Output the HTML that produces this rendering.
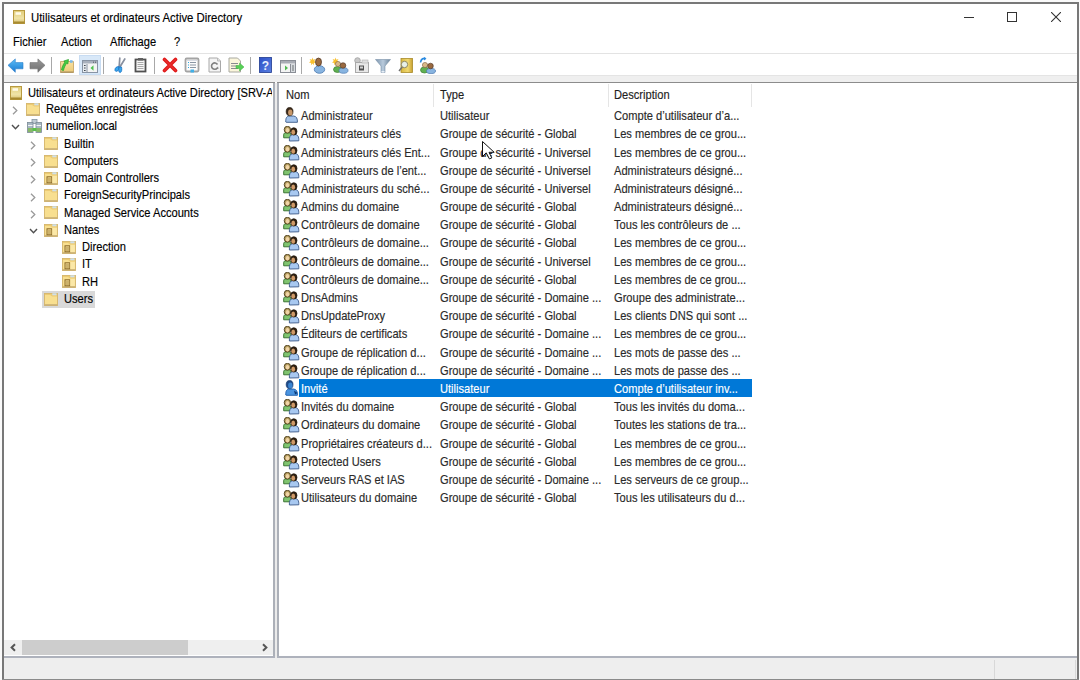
<!DOCTYPE html><html><head><meta charset="utf-8"><style>
html,body{margin:0;padding:0;}
body{width:1080px;height:680px;position:relative;overflow:hidden;background:#fafafa;font-family:"Liberation Sans",sans-serif;}
.t{position:absolute;white-space:nowrap;line-height:16px;height:16px;-webkit-text-stroke:0.15px currentColor;transform-origin:0 0;}
.i{position:absolute;display:block;}
.b{position:absolute;}
</style></head><body>
<div class="b" style="left:2px;top:2px;width:1077px;height:678px;background:#fff;"></div><div class="b" style="left:2px;top:2px;width:1077px;height:2px;background:#787878;"></div><div class="b" style="left:2px;top:2px;width:2px;height:678px;background:#787878;"></div><div class="b" style="left:1077px;top:2px;width:2px;height:678px;background:#787878;"></div><div class="b" style="left:2px;top:679px;width:1077px;height:1px;background:#8a8a8a;"></div><svg class="i" style="left:13px;top:10px" width="12" height="14" viewBox="0 0 12 14"><defs><linearGradient id="adg" x1="0" y1="0" x2="0" y2="1"><stop offset="0" stop-color="#e0cc78"/><stop offset="0.6" stop-color="#f0e4a8"/><stop offset="1" stop-color="#d8c070"/></linearGradient></defs><rect x="0.5" y="0.5" width="11" height="13" fill="url(#adg)" stroke="#b89a40" stroke-width="1"/><rect x="0.5" y="11.5" width="11" height="2" fill="#a88a30"/><rect x="2.5" y="2.2" width="5.5" height="2.6" fill="#fffbe8"/></svg><div class="t" style="left:31.00px;top:9.57px;font-size:12.2px;letter-spacing:0px;color:#000;transform:scaleX(0.933);">Utilisateurs et ordinateurs Active Directory</div>
<div class="b" style="left:964px;top:17px;width:10px;height:1px;background:#333;"></div><div class="b" style="left:1007px;top:12px;width:8px;height:8px;border:1px solid #333;"></div><svg class="i" style="left:1051px;top:12px" width="10" height="10" viewBox="0 0 10 10"><path d="M0 0 L10 10 M10 0 L0 10" stroke="#333" stroke-width="1.1"/></svg><div class="t" style="left:13.00px;top:34.07px;font-size:12.2px;letter-spacing:0px;color:#000;transform:scaleX(0.912);">Fichier</div>
<div class="t" style="left:61.00px;top:34.07px;font-size:12.2px;letter-spacing:0px;color:#000;transform:scaleX(0.912);">Action</div>
<div class="t" style="left:110.00px;top:34.07px;font-size:12.2px;letter-spacing:0px;color:#000;transform:scaleX(0.912);">Affichage</div>
<div class="t" style="left:174.00px;top:34.07px;font-size:12.2px;letter-spacing:0px;color:#000;transform:scaleX(0.912);">?</div>
<div class="b" style="left:4px;top:53px;width:1073px;height:1px;background:#e3e3e3;"></div><svg class="i" style="left:7px;top:58px" width="17" height="15" viewBox="0 0 17 15"><defs><linearGradient id="ba" x1="0" y1="0" x2="0" y2="1"><stop offset="0" stop-color="#5cc0f8"/><stop offset="1" stop-color="#1a78d0"/></linearGradient></defs><path d="M1 7.3 L8.3 0.9 V4.6 H16 V10.8 H8.3 V14.3 Z" fill="url(#ba)" stroke="#2a7cc8" stroke-width="0.6" stroke-linejoin="round"/></svg><svg class="i" style="left:29px;top:58px" width="17" height="15" viewBox="0 0 17 15"><defs><linearGradient id="fa" x1="0" y1="0" x2="0" y2="1"><stop offset="0" stop-color="#9a9a9a"/><stop offset="1" stop-color="#6e6e6e"/></linearGradient></defs><path d="M16 7.3 L8.9 0.9 V4.6 H1 V10.8 H8.9 V14.3 Z" fill="url(#fa)" stroke="#707070" stroke-width="0.6" stroke-linejoin="round"/></svg><div class="b" style="left:51px;top:57px;width:1px;height:17px;background:#a8a8a8;"></div><svg class="i" style="left:59px;top:57px" width="16" height="17" viewBox="0 0 16 17"><defs><linearGradient id="uf" x1="0" y1="0" x2="0" y2="1"><stop offset="0" stop-color="#f8e0a0"/><stop offset="1" stop-color="#eccb78"/></linearGradient></defs><path d="M1.5 4.5 h13 v11 h-13z" fill="url(#uf)" stroke="#c8a868" stroke-width="0.9"/><rect x="1.5" y="14.5" width="13" height="1.2" fill="#a89060"/><rect x="11" y="3.2" width="2.6" height="2.6" fill="#7ab8e8"/><path d="M2.5 13 C3 9.5 4.5 7 6 5 L4.8 4 L9.5 2.5 L8.8 7 L7.6 6.2 C6.5 8 5 10.5 4.5 13.5 Z" fill="#44cc44" stroke="#2aa02a" stroke-width="0.7" stroke-linejoin="round"/></svg><div class="b" style="left:79px;top:55px;width:22px;height:20px;background:#d8e8f8;box-shadow:inset 0 0 0 1px #c8dcf2;"></div><svg class="i" style="left:82px;top:60px" width="16" height="13" viewBox="0 0 16 13"><rect x="0.5" y="0.5" width="15" height="12" fill="#f4f4f4" stroke="#8894a4" stroke-width="1"/><rect x="1" y="1" width="14" height="2.5" fill="#a8b0bc"/><path d="M11 2.2 h1 M13 2.2 h1" stroke="#505860" stroke-width="1"/><rect x="1" y="4" width="3.5" height="8" fill="#e8ecf0"/><path d="M5 4 v8" stroke="#8894a4" stroke-width="1"/><rect x="2" y="5" width="1.6" height="1" fill="#404850"/><rect x="2" y="7.5" width="1.6" height="1" fill="#404850"/><rect x="2" y="10" width="1.6" height="1" fill="#404850"/><path d="M8.5 8 L11.5 5.3 V10.7z" fill="#50c050"/></svg><div class="b" style="left:103px;top:57px;width:1px;height:17px;background:#a8a8a8;"></div><svg class="i" style="left:112px;top:57px" width="14" height="17" viewBox="0 0 14 17"><path d="M7.2 9 L7.8 1.2 M8.2 9.5 L12.8 2" stroke="#8890a0" stroke-width="1.7" stroke-linecap="round"/><path d="M3 13.5 C2.5 11 4.5 9.5 7 9.5 L6.5 12.5 C6 14.5 3.5 15 3 13.5z" fill="#38a8f0" stroke="#1a70c0" stroke-width="0.8"/><path d="M7 10 L9.5 10 C10 12 10 15 8.2 15.5 C6.5 15.5 6.5 13 7 10z" fill="#38a8f0" stroke="#1a70c0" stroke-width="0.8"/></svg><svg class="i" style="left:134px;top:57px" width="13" height="16" viewBox="0 0 13 16"><rect x="1.5" y="2.5" width="10" height="12" fill="#f8f8f8" stroke="#505050" stroke-width="1.8"/><rect x="4" y="1" width="5" height="2.5" fill="#606060"/><rect x="3.5" y="5" width="6" height="0.9" fill="#a0a0a0"/><rect x="3.5" y="7" width="6" height="0.9" fill="#a0a0a0"/><rect x="3.5" y="9" width="6" height="0.9" fill="#a0a0a0"/><rect x="3.5" y="11" width="6" height="0.9" fill="#a0a0a0"/></svg><div class="b" style="left:154px;top:57px;width:1px;height:17px;background:#a8a8a8;"></div><svg class="i" style="left:162px;top:57px" width="16" height="16" viewBox="0 0 16 16"><path d="M2.5 2.5 L13.5 13.5 M13.5 2.5 L2.5 13.5" stroke="#e01818" stroke-width="3.6" stroke-linecap="round"/><path d="M2.5 2.5 L13.5 13.5 M13.5 2.5 L2.5 13.5" stroke="#f04040" stroke-width="1.2" stroke-linecap="round" opacity="0.6"/></svg><svg class="i" style="left:184px;top:57px" width="16" height="16" viewBox="0 0 16 16"><rect x="1.5" y="1.5" width="13" height="13" rx="1.2" fill="#fcfcfc" stroke="#a4a4a4" stroke-width="1.8"/><rect x="3" y="3" width="10" height="1" fill="#d8dce4"/><rect x="4" y="5" width="1" height="1" fill="#30a8e0"/><rect x="6" y="5" width="6" height="1" fill="#8a96a4"/><rect x="4" y="7.5" width="1" height="1" fill="#30a8e0"/><rect x="6" y="7.5" width="6" height="1" fill="#8a96a4"/><rect x="4" y="10" width="1" height="1" fill="#30a8e0"/><rect x="6" y="10" width="6" height="1" fill="#8a96a4"/><rect x="6.5" y="12.5" width="3.5" height="3" fill="#40b0e8"/></svg><svg class="i" style="left:208px;top:57px" width="14" height="16" viewBox="0 0 14 16"><path d="M1 1 h8.5 l3 3 v11 h-11.5z" fill="#f4f4f4" stroke="#a8a8a8" stroke-width="1"/><path d="M9.5 1 v3 h3" fill="#e0e0e0" stroke="#b0b0b0" stroke-width="0.8"/><path d="M9.3 11 A3.2 3.2 0 1 1 9.5 7.5" fill="none" stroke="#808080" stroke-width="1.6"/><path d="M8 11.5 L10.5 12 L10 9.5z" fill="#808080"/></svg><svg class="i" style="left:228px;top:57px" width="17" height="16" viewBox="0 0 17 16"><path d="M1 1 h8.5 l3 3 v11 h-11.5z" fill="#fbf6dc" stroke="#a8a8a0" stroke-width="1"/><path d="M3 6.5 h7 M3 9 h7 M3 11.5 h7" stroke="#8a8a90" stroke-width="1"/><path d="M8 8.5 h3.5 v-2.5 l4.5 4 l-4.5 4 v-2.5 h-3.5z" fill="#58d058" stroke="#40b040" stroke-width="0.5"/></svg><div class="b" style="left:250px;top:57px;width:1px;height:17px;background:#a8a8a8;"></div><svg class="i" style="left:259px;top:57px" width="13" height="16" viewBox="0 0 13 16"><defs><linearGradient id="hp" x1="0" y1="0" x2="1" y2="1"><stop offset="0" stop-color="#2c50c8"/><stop offset="1" stop-color="#5a80e0"/></linearGradient></defs><rect x="0.5" y="0.5" width="12" height="15" fill="url(#hp)" stroke="#1e3a90" stroke-width="0.8"/><text x="6.5" y="12.5" font-family="Liberation Sans" font-size="12" font-weight="bold" fill="#e8f0ff" text-anchor="middle">?</text></svg><svg class="i" style="left:280px;top:60px" width="16" height="13" viewBox="0 0 16 13"><rect x="0.5" y="0.5" width="15" height="12" fill="#f4f4f4" stroke="#8a8e96" stroke-width="1"/><rect x="1" y="1" width="14" height="2.5" fill="#a8acb4"/><rect x="11" y="4" width="4" height="8" fill="#d8dce0"/><path d="M10.5 4 v8" stroke="#8a8e96"/><path d="M12 6 h2 M12 8 h2 M12 10 h2" stroke="#606468" stroke-width="0.9"/><path d="M5 5.5 L8 8 L5 10.5z" fill="#50b850"/></svg><div class="b" style="left:301px;top:57px;width:1px;height:17px;background:#a8a8a8;"></div><svg class="i" style="left:309px;top:57px" width="17" height="17" viewBox="0 0 17 17"><path d="M3.5 0.5 l0.8 2.2 l2.2 -0.6 l-1.2 2 l1.8 1.5 l-2.3 0.3 l0.2 2.3 l-1.5 -1.6 l-1.5 1.6 l0.2 -2.3 l-2.2 -0.3 l1.8 -1.5 l-1.2 -2 l2.2 0.6z" fill="#f8c030"/><ellipse cx="10.5" cy="12.5" rx="5.2" ry="3.8" fill="#88b4e0" stroke="#4a78b0" stroke-width="0.8"/><ellipse cx="9.5" cy="5" rx="3" ry="4" fill="#9a6a40" stroke="#4a3020" stroke-width="0.7"/></svg><svg class="i" style="left:332px;top:57px" width="17" height="17" viewBox="0 0 17 17"><path d="M3.5 0.5 l0.8 2.2 l2.2 -0.6 l-1.2 2 l1.8 1.5 l-2.3 0.3 l0.2 2.3 l-1.5 -1.6 l-1.5 1.6 l0.2 -2.3 l-2.2 -0.3 l1.8 -1.5 l-1.2 -2 l2.2 0.6z" fill="#f8c030"/><ellipse cx="5.5" cy="12.5" rx="4" ry="3" fill="#60b050" stroke="#3a8030" stroke-width="0.7"/><circle cx="6" cy="7" r="2.6" fill="#d8b888" stroke="#806040" stroke-width="0.6"/><ellipse cx="11.5" cy="13.5" rx="4.5" ry="2.8" fill="#88b4e0" stroke="#4a78b0" stroke-width="0.7"/><circle cx="11" cy="8.5" r="2.8" fill="#9a6a40" stroke="#4a3020" stroke-width="0.6"/></svg><svg class="i" style="left:354px;top:57px" width="16" height="17" viewBox="0 0 16 17"><circle cx="3.5" cy="3.5" r="2.8" fill="#c8c8c8" stroke="#a0a0a0" stroke-width="0.8"/><rect x="1.5" y="5.5" width="13" height="10" fill="#e8e8e8" stroke="#a8a8a8" stroke-width="1"/><rect x="8" y="3" width="6" height="3" fill="#e0e0e0" stroke="#b0b0b0" stroke-width="0.6"/><rect x="5" y="8.5" width="5" height="5" fill="#505050"/><rect x="6" y="9.5" width="3" height="2" fill="#d0d0d0"/></svg><svg class="i" style="left:375px;top:58px" width="16" height="15" viewBox="0 0 16 15"><defs><linearGradient id="fl" x1="0" y1="0" x2="1" y2="0"><stop offset="0" stop-color="#7c94ac"/><stop offset="0.5" stop-color="#b8cadc"/><stop offset="1" stop-color="#6a8298"/></linearGradient></defs><path d="M0.5 1.5 h15 l-5.5 6.5 v6.5 h-4 v-6.5z" fill="url(#fl)" stroke="#7890a8" stroke-width="0.6"/><rect x="6.5" y="13" width="3" height="1.5" fill="#e8f0f8"/></svg><svg class="i" style="left:398px;top:58px" width="15" height="15" viewBox="0 0 15 15"><defs><linearGradient id="fd" x1="0" y1="0" x2="1" y2="0"><stop offset="0" stop-color="#d8b840"/><stop offset="0.6" stop-color="#f0d870"/><stop offset="1" stop-color="#c8a030"/></linearGradient></defs><rect x="3" y="0.5" width="11.5" height="14" fill="url(#fd)" stroke="#a88a28" stroke-width="0.8"/><circle cx="6.5" cy="6.5" r="3.2" fill="#e8f0e8" stroke="#908860" stroke-width="1"/><path d="M4.2 9 L1 13" stroke="#707070" stroke-width="1.4"/></svg><svg class="i" style="left:419px;top:57px" width="17" height="17" viewBox="0 0 17 17"><path d="M1.5 5.5 C2 2 4 1 6.5 1.5" fill="none" stroke="#2a8ae0" stroke-width="1.6"/><path d="M5 0 L7.5 1.8 L5 3.5z" fill="#2a8ae0"/><ellipse cx="5.5" cy="13" rx="4" ry="3" fill="#60b050" stroke="#3a8030" stroke-width="0.7"/><circle cx="6" cy="8" r="2.6" fill="#d8b888" stroke="#806040" stroke-width="0.6"/><ellipse cx="12" cy="14" rx="4.5" ry="2.6" fill="#88b4e0" stroke="#4a78b0" stroke-width="0.7"/><circle cx="11.5" cy="9" r="2.8" fill="#9a6a40" stroke="#4a3020" stroke-width="0.6"/></svg><div class="b" style="left:4px;top:75px;width:1073px;height:7px;background:#efefef;border-top:1px solid #e4e4e4;box-sizing:border-box;"></div><div class="b" style="left:4px;top:82px;width:271px;height:1px;background:#8c8c8c;"></div><div class="b" style="left:277px;top:82px;width:800px;height:1px;background:#8c8c8c;"></div><div class="b" style="left:4px;top:83px;width:1073px;height:575px;background:#ebebeb;"></div><div class="b" style="left:4px;top:83px;width:269px;height:573px;background:#fff;"></div><div class="b" style="left:273px;top:83px;width:2px;height:575px;background:#acb0b8;"></div><div class="b" style="left:4px;top:656px;width:271px;height:2px;background:#aeb2bc;"></div><div class="b" style="left:279px;top:83px;width:798px;height:573px;background:#fff;"></div><div class="b" style="left:277px;top:83px;width:2px;height:575px;background:#acb0b8;"></div><div class="b" style="left:277px;top:656px;width:800px;height:2px;background:#aeb2bc;"></div><div class="b" style="left:4px;top:658px;width:1073px;height:21px;background:#eeeeee;"></div><div class="b" style="left:994px;top:660px;width:1px;height:19px;background:#d8d8d8;"></div><div class="b" style="left:1075px;top:660px;width:1px;height:19px;background:#d8d8d8;"></div><div class="b" style="left:4px;top:640px;width:269px;height:15px;background:#efefef;"></div><div class="b" style="left:22px;top:640px;width:166px;height:15px;background:#cdcdcd;"></div><svg class="i" style="left:9px;top:643px" width="8" height="9" viewBox="0 0 8 9"><path d="M6 1.2 L2.6 4.5 L6 7.8" fill="none" stroke="#555" stroke-width="2"/></svg><svg class="i" style="left:261px;top:643px" width="8" height="9" viewBox="0 0 8 9"><path d="M2 1.2 L5.4 4.5 L2 7.8" fill="none" stroke="#555" stroke-width="2"/></svg><svg class="i" style="left:9.7px;top:85.5px" width="12" height="14" viewBox="0 0 12 14"><defs><linearGradient id="adg" x1="0" y1="0" x2="0" y2="1"><stop offset="0" stop-color="#e0cc78"/><stop offset="0.6" stop-color="#f0e4a8"/><stop offset="1" stop-color="#d8c070"/></linearGradient></defs><rect x="0.5" y="0.5" width="11" height="13" fill="url(#adg)" stroke="#b89a40" stroke-width="1"/><rect x="0.5" y="11.5" width="11" height="2" fill="#a88a30"/><rect x="2.5" y="2.2" width="5.5" height="2.6" fill="#fffbe8"/></svg><div class="b" style="left:28px;top:83px;width:244px;height:17px;overflow:hidden;"><div class="t" style="left:0.00px;top:1.77px;font-size:12.2px;letter-spacing:0px;color:#000;transform:scaleX(0.912);">Utilisateurs et ordinateurs Active Directory [SRV-AD01]</div>
</div><svg class="i" style="left:12.099999999999998px;top:106.25px" width="7" height="9" viewBox="0 0 7 9"><path d="M1 0.8 L4.8 4.5 L1 8.2" fill="none" stroke="#9a9a9a" stroke-width="1.3"/></svg><svg class="i" style="left:25.599999999999998px;top:102.75px" width="14" height="13" viewBox="0 0 14 13"><rect x="0.5" y="0.5" width="13" height="12" fill="#eccb74" stroke="#d6b66a" stroke-width="0.9"/><rect x="8.3" y="0.3" width="4.2" height="2" fill="#cfe0ea"/><path d="M1 2 H6 L8.2 3.4 H13 V11.6 H1 Z" fill="#f8df90"/><rect x="0.5" y="11.3" width="13" height="1.2" fill="#c4ac78"/></svg><div class="t" style="left:46.40px;top:101.22px;font-size:12.2px;letter-spacing:0px;color:#000;transform:scaleX(0.912);">Requêtes enregistrées</div>
<svg class="i" style="left:10.599999999999998px;top:124.29999999999998px" width="10" height="7" viewBox="0 0 10 7"><path d="M1 1 L4.5 4.8 L8 1" fill="none" stroke="#505050" stroke-width="1.4"/></svg><svg class="i" style="left:26.9px;top:119.19999999999999px" width="15" height="14" viewBox="0 0 15 14"><rect x="5" y="0.5" width="5" height="4" fill="#c0ccd4" stroke="#8494a0" stroke-width="0.8"/><rect x="0.5" y="3.5" width="5.5" height="10" fill="#a8b8c4" stroke="#7a8a96" stroke-width="0.8"/><rect x="9" y="3.5" width="5.5" height="10" fill="#a8b8c4" stroke="#7a8a96" stroke-width="0.8"/><path d="M1 6.5 h4.5 M9.5 6.5 h4.5" stroke="#f4f4f4" stroke-width="1"/><rect x="1" y="9" width="4.6" height="4" fill="#88b868"/><rect x="9.4" y="9" width="4.6" height="4" fill="#88b868"/><rect x="5.5" y="9" width="4" height="3" fill="#58c048"/></svg><div class="t" style="left:46.40px;top:118.47px;font-size:12.2px;letter-spacing:0px;color:#000;transform:scaleX(0.912);">numelion.local</div>
<svg class="i" style="left:30.100000000000005px;top:140.75px" width="7" height="9" viewBox="0 0 7 9"><path d="M1 0.8 L4.8 4.5 L1 8.2" fill="none" stroke="#9a9a9a" stroke-width="1.3"/></svg><svg class="i" style="left:43.60000000000001px;top:137.25px" width="14" height="13" viewBox="0 0 14 13"><rect x="0.5" y="0.5" width="13" height="12" fill="#eccb74" stroke="#d6b66a" stroke-width="0.9"/><rect x="8.3" y="0.3" width="4.2" height="2" fill="#cfe0ea"/><path d="M1 2 H6 L8.2 3.4 H13 V11.6 H1 Z" fill="#f8df90"/><rect x="0.5" y="11.3" width="13" height="1.2" fill="#c4ac78"/></svg><div class="t" style="left:64.40px;top:135.72px;font-size:12.2px;letter-spacing:0px;color:#000;transform:scaleX(0.912);">Builtin</div>
<svg class="i" style="left:30.100000000000005px;top:158.0px" width="7" height="9" viewBox="0 0 7 9"><path d="M1 0.8 L4.8 4.5 L1 8.2" fill="none" stroke="#9a9a9a" stroke-width="1.3"/></svg><svg class="i" style="left:43.60000000000001px;top:154.5px" width="14" height="13" viewBox="0 0 14 13"><rect x="0.5" y="0.5" width="13" height="12" fill="#eccb74" stroke="#d6b66a" stroke-width="0.9"/><rect x="8.3" y="0.3" width="4.2" height="2" fill="#cfe0ea"/><path d="M1 2 H6 L8.2 3.4 H13 V11.6 H1 Z" fill="#f8df90"/><rect x="0.5" y="11.3" width="13" height="1.2" fill="#c4ac78"/></svg><div class="t" style="left:64.40px;top:152.97px;font-size:12.2px;letter-spacing:0px;color:#000;transform:scaleX(0.912);">Computers</div>
<svg class="i" style="left:30.100000000000005px;top:175.25px" width="7" height="9" viewBox="0 0 7 9"><path d="M1 0.8 L4.8 4.5 L1 8.2" fill="none" stroke="#9a9a9a" stroke-width="1.3"/></svg><svg class="i" style="left:43.60000000000001px;top:171.75px" width="14" height="13" viewBox="0 0 14 13"><rect x="0.5" y="0.5" width="13" height="12" fill="#eccb74" stroke="#d6b66a" stroke-width="0.9"/><rect x="8.3" y="0.3" width="4.2" height="2" fill="#cfe0ea"/><path d="M1 2 H6 L8.2 3.4 H13 V11.6 H1 Z" fill="#f8df90"/><rect x="0.5" y="11.3" width="13" height="1.2" fill="#c4ac78"/><rect x="3" y="4.8" width="4.8" height="6" fill="#f0d890" stroke="#8a6a28" stroke-width="1"/><path d="M4 7 h3 M4 9 h3" stroke="#8a6a28" stroke-width="0.7"/><rect x="8.3" y="4" width="4.5" height="7" fill="#fbe8a8"/></svg><div class="t" style="left:64.40px;top:170.22px;font-size:12.2px;letter-spacing:0px;color:#000;transform:scaleX(0.912);">Domain Controllers</div>
<svg class="i" style="left:30.100000000000005px;top:192.5px" width="7" height="9" viewBox="0 0 7 9"><path d="M1 0.8 L4.8 4.5 L1 8.2" fill="none" stroke="#9a9a9a" stroke-width="1.3"/></svg><svg class="i" style="left:43.60000000000001px;top:189.0px" width="14" height="13" viewBox="0 0 14 13"><rect x="0.5" y="0.5" width="13" height="12" fill="#eccb74" stroke="#d6b66a" stroke-width="0.9"/><rect x="8.3" y="0.3" width="4.2" height="2" fill="#cfe0ea"/><path d="M1 2 H6 L8.2 3.4 H13 V11.6 H1 Z" fill="#f8df90"/><rect x="0.5" y="11.3" width="13" height="1.2" fill="#c4ac78"/></svg><div class="t" style="left:64.40px;top:187.47px;font-size:12.2px;letter-spacing:0px;color:#000;transform:scaleX(0.912);">ForeignSecurityPrincipals</div>
<svg class="i" style="left:30.100000000000005px;top:209.75px" width="7" height="9" viewBox="0 0 7 9"><path d="M1 0.8 L4.8 4.5 L1 8.2" fill="none" stroke="#9a9a9a" stroke-width="1.3"/></svg><svg class="i" style="left:43.60000000000001px;top:206.25px" width="14" height="13" viewBox="0 0 14 13"><rect x="0.5" y="0.5" width="13" height="12" fill="#eccb74" stroke="#d6b66a" stroke-width="0.9"/><rect x="8.3" y="0.3" width="4.2" height="2" fill="#cfe0ea"/><path d="M1 2 H6 L8.2 3.4 H13 V11.6 H1 Z" fill="#f8df90"/><rect x="0.5" y="11.3" width="13" height="1.2" fill="#c4ac78"/></svg><div class="t" style="left:64.40px;top:204.72px;font-size:12.2px;letter-spacing:0px;color:#000;transform:scaleX(0.912);">Managed Service Accounts</div>
<svg class="i" style="left:28.600000000000005px;top:227.79999999999998px" width="10" height="7" viewBox="0 0 10 7"><path d="M1 1 L4.5 4.8 L8 1" fill="none" stroke="#505050" stroke-width="1.4"/></svg><svg class="i" style="left:43.60000000000001px;top:223.5px" width="14" height="13" viewBox="0 0 14 13"><rect x="0.5" y="0.5" width="13" height="12" fill="#eccb74" stroke="#d6b66a" stroke-width="0.9"/><rect x="8.3" y="0.3" width="4.2" height="2" fill="#cfe0ea"/><path d="M1 2 H6 L8.2 3.4 H13 V11.6 H1 Z" fill="#f8df90"/><rect x="0.5" y="11.3" width="13" height="1.2" fill="#c4ac78"/><rect x="3" y="4.8" width="4.8" height="6" fill="#f0d890" stroke="#8a6a28" stroke-width="1"/><path d="M4 7 h3 M4 9 h3" stroke="#8a6a28" stroke-width="0.7"/><rect x="8.3" y="4" width="4.5" height="7" fill="#fbe8a8"/></svg><div class="t" style="left:64.40px;top:221.97px;font-size:12.2px;letter-spacing:0px;color:#000;transform:scaleX(0.912);">Nantes</div>
<svg class="i" style="left:61.60000000000001px;top:240.75px" width="14" height="13" viewBox="0 0 14 13"><rect x="0.5" y="0.5" width="13" height="12" fill="#eccb74" stroke="#d6b66a" stroke-width="0.9"/><rect x="8.3" y="0.3" width="4.2" height="2" fill="#cfe0ea"/><path d="M1 2 H6 L8.2 3.4 H13 V11.6 H1 Z" fill="#f8df90"/><rect x="0.5" y="11.3" width="13" height="1.2" fill="#c4ac78"/><rect x="3" y="4.8" width="4.8" height="6" fill="#f0d890" stroke="#8a6a28" stroke-width="1"/><path d="M4 7 h3 M4 9 h3" stroke="#8a6a28" stroke-width="0.7"/><rect x="8.3" y="4" width="4.5" height="7" fill="#fbe8a8"/></svg><div class="t" style="left:82.40px;top:239.22px;font-size:12.2px;letter-spacing:0px;color:#000;transform:scaleX(0.912);">Direction</div>
<svg class="i" style="left:61.60000000000001px;top:258.0px" width="14" height="13" viewBox="0 0 14 13"><rect x="0.5" y="0.5" width="13" height="12" fill="#eccb74" stroke="#d6b66a" stroke-width="0.9"/><rect x="8.3" y="0.3" width="4.2" height="2" fill="#cfe0ea"/><path d="M1 2 H6 L8.2 3.4 H13 V11.6 H1 Z" fill="#f8df90"/><rect x="0.5" y="11.3" width="13" height="1.2" fill="#c4ac78"/><rect x="3" y="4.8" width="4.8" height="6" fill="#f0d890" stroke="#8a6a28" stroke-width="1"/><path d="M4 7 h3 M4 9 h3" stroke="#8a6a28" stroke-width="0.7"/><rect x="8.3" y="4" width="4.5" height="7" fill="#fbe8a8"/></svg><div class="t" style="left:82.40px;top:256.47px;font-size:12.2px;letter-spacing:0px;color:#000;transform:scaleX(0.912);">IT</div>
<svg class="i" style="left:61.60000000000001px;top:275.25px" width="14" height="13" viewBox="0 0 14 13"><rect x="0.5" y="0.5" width="13" height="12" fill="#eccb74" stroke="#d6b66a" stroke-width="0.9"/><rect x="8.3" y="0.3" width="4.2" height="2" fill="#cfe0ea"/><path d="M1 2 H6 L8.2 3.4 H13 V11.6 H1 Z" fill="#f8df90"/><rect x="0.5" y="11.3" width="13" height="1.2" fill="#c4ac78"/><rect x="3" y="4.8" width="4.8" height="6" fill="#f0d890" stroke="#8a6a28" stroke-width="1"/><path d="M4 7 h3 M4 9 h3" stroke="#8a6a28" stroke-width="0.7"/><rect x="8.3" y="4" width="4.5" height="7" fill="#fbe8a8"/></svg><div class="t" style="left:82.40px;top:273.72px;font-size:12.2px;letter-spacing:0px;color:#000;transform:scaleX(0.912);">RH</div>
<div class="b" style="left:42px;top:291.00px;width:53px;height:17px;background:#d9d9d9;"></div><svg class="i" style="left:43.60000000000001px;top:292.5px" width="14" height="13" viewBox="0 0 14 13"><rect x="0.5" y="0.5" width="13" height="12" fill="#eccb74" stroke="#d6b66a" stroke-width="0.9"/><rect x="8.3" y="0.3" width="4.2" height="2" fill="#cfe0ea"/><path d="M1 2 H6 L8.2 3.4 H13 V11.6 H1 Z" fill="#f8df90"/><rect x="0.5" y="11.3" width="13" height="1.2" fill="#c4ac78"/></svg><div class="t" style="left:64.40px;top:290.97px;font-size:12.2px;letter-spacing:0px;color:#000;transform:scaleX(0.912);">Users</div>
<div class="t" style="left:285.50px;top:87.27px;font-size:12.2px;letter-spacing:0px;color:#1e1e1e;transform:scaleX(0.912);">Nom</div>
<div class="t" style="left:439.50px;top:87.27px;font-size:12.2px;letter-spacing:0px;color:#1e1e1e;transform:scaleX(0.912);">Type</div>
<div class="t" style="left:613.90px;top:87.27px;font-size:12.2px;letter-spacing:0px;color:#1e1e1e;transform:scaleX(0.912);">Description</div>
<div class="b" style="left:433px;top:84px;width:1px;height:23px;background:#e5e5e5;"></div><div class="b" style="left:608px;top:84px;width:1px;height:23px;background:#e5e5e5;"></div><div class="b" style="left:751px;top:84px;width:1px;height:23px;background:#e5e5e5;"></div><svg class="i" style="left:285px;top:107.4px" width="16" height="16" viewBox="0 0 16 16"><path d="M0.8 15 C0.5 11 1.8 9.2 4.2 9 L8.5 9 C11.5 9.2 12.6 11.5 12.4 15.3 L1.2 15.3z" fill="#a4c4ec" stroke="#3a5a88" stroke-width="0.9"/><ellipse cx="4.6" cy="4.6" rx="3.4" ry="4.1" fill="#3a2818" stroke="#24180c" stroke-width="0.7"/><ellipse cx="5.3" cy="5.4" rx="2.2" ry="3" fill="#c8986a"/></svg><div class="t" style="left:300.60px;top:108.17px;font-size:12.2px;letter-spacing:0px;color:#2a2a2a;transform:scaleX(0.912);">Administrateur</div>
<div class="t" style="left:439.70px;top:108.17px;font-size:12.2px;letter-spacing:0px;color:#2a2a2a;transform:scaleX(0.912);">Utilisateur</div>
<div class="t" style="left:613.90px;top:108.17px;font-size:12.2px;letter-spacing:0px;color:#2a2a2a;transform:scaleX(0.912);">Compte d’utilisateur d’a...</div>
<svg class="i" style="left:283px;top:126.385px" width="17" height="16" viewBox="0 0 17 16"><path d="M0.7 11.8 L0.7 8.6 C0.7 7.3 1.8 6.8 3 6.8 L6 6.8 C7.2 6.8 7.8 7.5 7.8 8.6 L7.8 11.8z" fill="#80c470" stroke="#2e6a26" stroke-width="0.9"/><ellipse cx="4.4" cy="3.7" rx="3.2" ry="3.4" fill="#b8a060" stroke="#4a3a1a" stroke-width="0.9"/><ellipse cx="4.5" cy="4.3" rx="1.7" ry="2.3" fill="#f0d4a8"/><path d="M6.4 15 C6 11 7.3 8.8 9.8 8.6 L12.2 8.6 C14.8 8.8 16 10.6 15.8 14.8 L6.8 15z" fill="#a8c8f0" stroke="#3a5888" stroke-width="0.9"/><ellipse cx="10.8" cy="5.4" rx="3.2" ry="3.7" fill="#2e2012" stroke="#201408" stroke-width="0.7"/><ellipse cx="10.2" cy="6.2" rx="1.9" ry="2.6" fill="#d09a68"/></svg><div class="t" style="left:300.60px;top:126.36px;font-size:12.2px;letter-spacing:0px;color:#2a2a2a;transform:scaleX(0.912);">Administrateurs clés</div>
<div class="t" style="left:439.70px;top:126.36px;font-size:12.2px;letter-spacing:0px;color:#2a2a2a;transform:scaleX(0.912);">Groupe de sécurité - Global</div>
<div class="t" style="left:613.90px;top:126.36px;font-size:12.2px;letter-spacing:0px;color:#2a2a2a;transform:scaleX(0.912);">Les membres de ce grou...</div>
<svg class="i" style="left:283px;top:144.57000000000002px" width="17" height="16" viewBox="0 0 17 16"><path d="M0.7 11.8 L0.7 8.6 C0.7 7.3 1.8 6.8 3 6.8 L6 6.8 C7.2 6.8 7.8 7.5 7.8 8.6 L7.8 11.8z" fill="#80c470" stroke="#2e6a26" stroke-width="0.9"/><ellipse cx="4.4" cy="3.7" rx="3.2" ry="3.4" fill="#b8a060" stroke="#4a3a1a" stroke-width="0.9"/><ellipse cx="4.5" cy="4.3" rx="1.7" ry="2.3" fill="#f0d4a8"/><path d="M6.4 15 C6 11 7.3 8.8 9.8 8.6 L12.2 8.6 C14.8 8.8 16 10.6 15.8 14.8 L6.8 15z" fill="#a8c8f0" stroke="#3a5888" stroke-width="0.9"/><ellipse cx="10.8" cy="5.4" rx="3.2" ry="3.7" fill="#2e2012" stroke="#201408" stroke-width="0.7"/><ellipse cx="10.2" cy="6.2" rx="1.9" ry="2.6" fill="#d09a68"/></svg><div class="t" style="left:300.60px;top:144.54px;font-size:12.2px;letter-spacing:0px;color:#2a2a2a;transform:scaleX(0.912);">Administrateurs clés Ent...</div>
<div class="t" style="left:439.70px;top:144.54px;font-size:12.2px;letter-spacing:0px;color:#2a2a2a;transform:scaleX(0.912);">Groupe de sécurité - Universel</div>
<div class="t" style="left:613.90px;top:144.54px;font-size:12.2px;letter-spacing:0px;color:#2a2a2a;transform:scaleX(0.912);">Les membres de ce grou...</div>
<svg class="i" style="left:283px;top:162.755px" width="17" height="16" viewBox="0 0 17 16"><path d="M0.7 11.8 L0.7 8.6 C0.7 7.3 1.8 6.8 3 6.8 L6 6.8 C7.2 6.8 7.8 7.5 7.8 8.6 L7.8 11.8z" fill="#80c470" stroke="#2e6a26" stroke-width="0.9"/><ellipse cx="4.4" cy="3.7" rx="3.2" ry="3.4" fill="#b8a060" stroke="#4a3a1a" stroke-width="0.9"/><ellipse cx="4.5" cy="4.3" rx="1.7" ry="2.3" fill="#f0d4a8"/><path d="M6.4 15 C6 11 7.3 8.8 9.8 8.6 L12.2 8.6 C14.8 8.8 16 10.6 15.8 14.8 L6.8 15z" fill="#a8c8f0" stroke="#3a5888" stroke-width="0.9"/><ellipse cx="10.8" cy="5.4" rx="3.2" ry="3.7" fill="#2e2012" stroke="#201408" stroke-width="0.7"/><ellipse cx="10.2" cy="6.2" rx="1.9" ry="2.6" fill="#d09a68"/></svg><div class="t" style="left:300.60px;top:162.73px;font-size:12.2px;letter-spacing:0px;color:#2a2a2a;transform:scaleX(0.912);">Administrateurs de l’ent...</div>
<div class="t" style="left:439.70px;top:162.73px;font-size:12.2px;letter-spacing:0px;color:#2a2a2a;transform:scaleX(0.912);">Groupe de sécurité - Universel</div>
<div class="t" style="left:613.90px;top:162.73px;font-size:12.2px;letter-spacing:0px;color:#2a2a2a;transform:scaleX(0.912);">Administrateurs désigné...</div>
<svg class="i" style="left:283px;top:180.94px" width="17" height="16" viewBox="0 0 17 16"><path d="M0.7 11.8 L0.7 8.6 C0.7 7.3 1.8 6.8 3 6.8 L6 6.8 C7.2 6.8 7.8 7.5 7.8 8.6 L7.8 11.8z" fill="#80c470" stroke="#2e6a26" stroke-width="0.9"/><ellipse cx="4.4" cy="3.7" rx="3.2" ry="3.4" fill="#b8a060" stroke="#4a3a1a" stroke-width="0.9"/><ellipse cx="4.5" cy="4.3" rx="1.7" ry="2.3" fill="#f0d4a8"/><path d="M6.4 15 C6 11 7.3 8.8 9.8 8.6 L12.2 8.6 C14.8 8.8 16 10.6 15.8 14.8 L6.8 15z" fill="#a8c8f0" stroke="#3a5888" stroke-width="0.9"/><ellipse cx="10.8" cy="5.4" rx="3.2" ry="3.7" fill="#2e2012" stroke="#201408" stroke-width="0.7"/><ellipse cx="10.2" cy="6.2" rx="1.9" ry="2.6" fill="#d09a68"/></svg><div class="t" style="left:300.60px;top:180.91px;font-size:12.2px;letter-spacing:0px;color:#2a2a2a;transform:scaleX(0.912);">Administrateurs du sché...</div>
<div class="t" style="left:439.70px;top:180.91px;font-size:12.2px;letter-spacing:0px;color:#2a2a2a;transform:scaleX(0.912);">Groupe de sécurité - Universel</div>
<div class="t" style="left:613.90px;top:180.91px;font-size:12.2px;letter-spacing:0px;color:#2a2a2a;transform:scaleX(0.912);">Administrateurs désigné...</div>
<svg class="i" style="left:283px;top:199.125px" width="17" height="16" viewBox="0 0 17 16"><path d="M0.7 11.8 L0.7 8.6 C0.7 7.3 1.8 6.8 3 6.8 L6 6.8 C7.2 6.8 7.8 7.5 7.8 8.6 L7.8 11.8z" fill="#80c470" stroke="#2e6a26" stroke-width="0.9"/><ellipse cx="4.4" cy="3.7" rx="3.2" ry="3.4" fill="#b8a060" stroke="#4a3a1a" stroke-width="0.9"/><ellipse cx="4.5" cy="4.3" rx="1.7" ry="2.3" fill="#f0d4a8"/><path d="M6.4 15 C6 11 7.3 8.8 9.8 8.6 L12.2 8.6 C14.8 8.8 16 10.6 15.8 14.8 L6.8 15z" fill="#a8c8f0" stroke="#3a5888" stroke-width="0.9"/><ellipse cx="10.8" cy="5.4" rx="3.2" ry="3.7" fill="#2e2012" stroke="#201408" stroke-width="0.7"/><ellipse cx="10.2" cy="6.2" rx="1.9" ry="2.6" fill="#d09a68"/></svg><div class="t" style="left:300.60px;top:199.10px;font-size:12.2px;letter-spacing:0px;color:#2a2a2a;transform:scaleX(0.912);">Admins du domaine</div>
<div class="t" style="left:439.70px;top:199.10px;font-size:12.2px;letter-spacing:0px;color:#2a2a2a;transform:scaleX(0.912);">Groupe de sécurité - Global</div>
<div class="t" style="left:613.90px;top:199.10px;font-size:12.2px;letter-spacing:0px;color:#2a2a2a;transform:scaleX(0.912);">Administrateurs désigné...</div>
<svg class="i" style="left:283px;top:217.31px" width="17" height="16" viewBox="0 0 17 16"><path d="M0.7 11.8 L0.7 8.6 C0.7 7.3 1.8 6.8 3 6.8 L6 6.8 C7.2 6.8 7.8 7.5 7.8 8.6 L7.8 11.8z" fill="#80c470" stroke="#2e6a26" stroke-width="0.9"/><ellipse cx="4.4" cy="3.7" rx="3.2" ry="3.4" fill="#b8a060" stroke="#4a3a1a" stroke-width="0.9"/><ellipse cx="4.5" cy="4.3" rx="1.7" ry="2.3" fill="#f0d4a8"/><path d="M6.4 15 C6 11 7.3 8.8 9.8 8.6 L12.2 8.6 C14.8 8.8 16 10.6 15.8 14.8 L6.8 15z" fill="#a8c8f0" stroke="#3a5888" stroke-width="0.9"/><ellipse cx="10.8" cy="5.4" rx="3.2" ry="3.7" fill="#2e2012" stroke="#201408" stroke-width="0.7"/><ellipse cx="10.2" cy="6.2" rx="1.9" ry="2.6" fill="#d09a68"/></svg><div class="t" style="left:300.60px;top:217.28px;font-size:12.2px;letter-spacing:0px;color:#2a2a2a;transform:scaleX(0.912);">Contrôleurs de domaine</div>
<div class="t" style="left:439.70px;top:217.28px;font-size:12.2px;letter-spacing:0px;color:#2a2a2a;transform:scaleX(0.912);">Groupe de sécurité - Global</div>
<div class="t" style="left:613.90px;top:217.28px;font-size:12.2px;letter-spacing:0px;color:#2a2a2a;transform:scaleX(0.912);">Tous les contrôleurs de ...</div>
<svg class="i" style="left:283px;top:235.495px" width="17" height="16" viewBox="0 0 17 16"><path d="M0.7 11.8 L0.7 8.6 C0.7 7.3 1.8 6.8 3 6.8 L6 6.8 C7.2 6.8 7.8 7.5 7.8 8.6 L7.8 11.8z" fill="#80c470" stroke="#2e6a26" stroke-width="0.9"/><ellipse cx="4.4" cy="3.7" rx="3.2" ry="3.4" fill="#b8a060" stroke="#4a3a1a" stroke-width="0.9"/><ellipse cx="4.5" cy="4.3" rx="1.7" ry="2.3" fill="#f0d4a8"/><path d="M6.4 15 C6 11 7.3 8.8 9.8 8.6 L12.2 8.6 C14.8 8.8 16 10.6 15.8 14.8 L6.8 15z" fill="#a8c8f0" stroke="#3a5888" stroke-width="0.9"/><ellipse cx="10.8" cy="5.4" rx="3.2" ry="3.7" fill="#2e2012" stroke="#201408" stroke-width="0.7"/><ellipse cx="10.2" cy="6.2" rx="1.9" ry="2.6" fill="#d09a68"/></svg><div class="t" style="left:300.60px;top:235.47px;font-size:12.2px;letter-spacing:0px;color:#2a2a2a;transform:scaleX(0.912);">Contrôleurs de domaine...</div>
<div class="t" style="left:439.70px;top:235.47px;font-size:12.2px;letter-spacing:0px;color:#2a2a2a;transform:scaleX(0.912);">Groupe de sécurité - Global</div>
<div class="t" style="left:613.90px;top:235.47px;font-size:12.2px;letter-spacing:0px;color:#2a2a2a;transform:scaleX(0.912);">Les membres de ce grou...</div>
<svg class="i" style="left:283px;top:253.68px" width="17" height="16" viewBox="0 0 17 16"><path d="M0.7 11.8 L0.7 8.6 C0.7 7.3 1.8 6.8 3 6.8 L6 6.8 C7.2 6.8 7.8 7.5 7.8 8.6 L7.8 11.8z" fill="#80c470" stroke="#2e6a26" stroke-width="0.9"/><ellipse cx="4.4" cy="3.7" rx="3.2" ry="3.4" fill="#b8a060" stroke="#4a3a1a" stroke-width="0.9"/><ellipse cx="4.5" cy="4.3" rx="1.7" ry="2.3" fill="#f0d4a8"/><path d="M6.4 15 C6 11 7.3 8.8 9.8 8.6 L12.2 8.6 C14.8 8.8 16 10.6 15.8 14.8 L6.8 15z" fill="#a8c8f0" stroke="#3a5888" stroke-width="0.9"/><ellipse cx="10.8" cy="5.4" rx="3.2" ry="3.7" fill="#2e2012" stroke="#201408" stroke-width="0.7"/><ellipse cx="10.2" cy="6.2" rx="1.9" ry="2.6" fill="#d09a68"/></svg><div class="t" style="left:300.60px;top:253.65px;font-size:12.2px;letter-spacing:0px;color:#2a2a2a;transform:scaleX(0.912);">Contrôleurs de domaine...</div>
<div class="t" style="left:439.70px;top:253.65px;font-size:12.2px;letter-spacing:0px;color:#2a2a2a;transform:scaleX(0.912);">Groupe de sécurité - Universel</div>
<div class="t" style="left:613.90px;top:253.65px;font-size:12.2px;letter-spacing:0px;color:#2a2a2a;transform:scaleX(0.912);">Les membres de ce grou...</div>
<svg class="i" style="left:283px;top:271.865px" width="17" height="16" viewBox="0 0 17 16"><path d="M0.7 11.8 L0.7 8.6 C0.7 7.3 1.8 6.8 3 6.8 L6 6.8 C7.2 6.8 7.8 7.5 7.8 8.6 L7.8 11.8z" fill="#80c470" stroke="#2e6a26" stroke-width="0.9"/><ellipse cx="4.4" cy="3.7" rx="3.2" ry="3.4" fill="#b8a060" stroke="#4a3a1a" stroke-width="0.9"/><ellipse cx="4.5" cy="4.3" rx="1.7" ry="2.3" fill="#f0d4a8"/><path d="M6.4 15 C6 11 7.3 8.8 9.8 8.6 L12.2 8.6 C14.8 8.8 16 10.6 15.8 14.8 L6.8 15z" fill="#a8c8f0" stroke="#3a5888" stroke-width="0.9"/><ellipse cx="10.8" cy="5.4" rx="3.2" ry="3.7" fill="#2e2012" stroke="#201408" stroke-width="0.7"/><ellipse cx="10.2" cy="6.2" rx="1.9" ry="2.6" fill="#d09a68"/></svg><div class="t" style="left:300.60px;top:271.84px;font-size:12.2px;letter-spacing:0px;color:#2a2a2a;transform:scaleX(0.912);">Contrôleurs de domaine...</div>
<div class="t" style="left:439.70px;top:271.84px;font-size:12.2px;letter-spacing:0px;color:#2a2a2a;transform:scaleX(0.912);">Groupe de sécurité - Global</div>
<div class="t" style="left:613.90px;top:271.84px;font-size:12.2px;letter-spacing:0px;color:#2a2a2a;transform:scaleX(0.912);">Les membres de ce grou...</div>
<svg class="i" style="left:283px;top:290.05px" width="17" height="16" viewBox="0 0 17 16"><path d="M0.7 11.8 L0.7 8.6 C0.7 7.3 1.8 6.8 3 6.8 L6 6.8 C7.2 6.8 7.8 7.5 7.8 8.6 L7.8 11.8z" fill="#80c470" stroke="#2e6a26" stroke-width="0.9"/><ellipse cx="4.4" cy="3.7" rx="3.2" ry="3.4" fill="#b8a060" stroke="#4a3a1a" stroke-width="0.9"/><ellipse cx="4.5" cy="4.3" rx="1.7" ry="2.3" fill="#f0d4a8"/><path d="M6.4 15 C6 11 7.3 8.8 9.8 8.6 L12.2 8.6 C14.8 8.8 16 10.6 15.8 14.8 L6.8 15z" fill="#a8c8f0" stroke="#3a5888" stroke-width="0.9"/><ellipse cx="10.8" cy="5.4" rx="3.2" ry="3.7" fill="#2e2012" stroke="#201408" stroke-width="0.7"/><ellipse cx="10.2" cy="6.2" rx="1.9" ry="2.6" fill="#d09a68"/></svg><div class="t" style="left:300.60px;top:290.02px;font-size:12.2px;letter-spacing:0px;color:#2a2a2a;transform:scaleX(0.912);">DnsAdmins</div>
<div class="t" style="left:439.70px;top:290.02px;font-size:12.2px;letter-spacing:0px;color:#2a2a2a;transform:scaleX(0.912);">Groupe de sécurité - Domaine ...</div>
<div class="t" style="left:613.90px;top:290.02px;font-size:12.2px;letter-spacing:0px;color:#2a2a2a;transform:scaleX(0.912);">Groupe des administrate...</div>
<svg class="i" style="left:283px;top:308.235px" width="17" height="16" viewBox="0 0 17 16"><path d="M0.7 11.8 L0.7 8.6 C0.7 7.3 1.8 6.8 3 6.8 L6 6.8 C7.2 6.8 7.8 7.5 7.8 8.6 L7.8 11.8z" fill="#80c470" stroke="#2e6a26" stroke-width="0.9"/><ellipse cx="4.4" cy="3.7" rx="3.2" ry="3.4" fill="#b8a060" stroke="#4a3a1a" stroke-width="0.9"/><ellipse cx="4.5" cy="4.3" rx="1.7" ry="2.3" fill="#f0d4a8"/><path d="M6.4 15 C6 11 7.3 8.8 9.8 8.6 L12.2 8.6 C14.8 8.8 16 10.6 15.8 14.8 L6.8 15z" fill="#a8c8f0" stroke="#3a5888" stroke-width="0.9"/><ellipse cx="10.8" cy="5.4" rx="3.2" ry="3.7" fill="#2e2012" stroke="#201408" stroke-width="0.7"/><ellipse cx="10.2" cy="6.2" rx="1.9" ry="2.6" fill="#d09a68"/></svg><div class="t" style="left:300.60px;top:308.21px;font-size:12.2px;letter-spacing:0px;color:#2a2a2a;transform:scaleX(0.912);">DnsUpdateProxy</div>
<div class="t" style="left:439.70px;top:308.21px;font-size:12.2px;letter-spacing:0px;color:#2a2a2a;transform:scaleX(0.912);">Groupe de sécurité - Global</div>
<div class="t" style="left:613.90px;top:308.21px;font-size:12.2px;letter-spacing:0px;color:#2a2a2a;transform:scaleX(0.912);">Les clients DNS qui sont ...</div>
<svg class="i" style="left:283px;top:326.42px" width="17" height="16" viewBox="0 0 17 16"><path d="M0.7 11.8 L0.7 8.6 C0.7 7.3 1.8 6.8 3 6.8 L6 6.8 C7.2 6.8 7.8 7.5 7.8 8.6 L7.8 11.8z" fill="#80c470" stroke="#2e6a26" stroke-width="0.9"/><ellipse cx="4.4" cy="3.7" rx="3.2" ry="3.4" fill="#b8a060" stroke="#4a3a1a" stroke-width="0.9"/><ellipse cx="4.5" cy="4.3" rx="1.7" ry="2.3" fill="#f0d4a8"/><path d="M6.4 15 C6 11 7.3 8.8 9.8 8.6 L12.2 8.6 C14.8 8.8 16 10.6 15.8 14.8 L6.8 15z" fill="#a8c8f0" stroke="#3a5888" stroke-width="0.9"/><ellipse cx="10.8" cy="5.4" rx="3.2" ry="3.7" fill="#2e2012" stroke="#201408" stroke-width="0.7"/><ellipse cx="10.2" cy="6.2" rx="1.9" ry="2.6" fill="#d09a68"/></svg><div class="t" style="left:300.60px;top:326.39px;font-size:12.2px;letter-spacing:0px;color:#2a2a2a;transform:scaleX(0.912);">Éditeurs de certificats</div>
<div class="t" style="left:439.70px;top:326.39px;font-size:12.2px;letter-spacing:0px;color:#2a2a2a;transform:scaleX(0.912);">Groupe de sécurité - Domaine ...</div>
<div class="t" style="left:613.90px;top:326.39px;font-size:12.2px;letter-spacing:0px;color:#2a2a2a;transform:scaleX(0.912);">Les membres de ce grou...</div>
<svg class="i" style="left:283px;top:344.60499999999996px" width="17" height="16" viewBox="0 0 17 16"><path d="M0.7 11.8 L0.7 8.6 C0.7 7.3 1.8 6.8 3 6.8 L6 6.8 C7.2 6.8 7.8 7.5 7.8 8.6 L7.8 11.8z" fill="#80c470" stroke="#2e6a26" stroke-width="0.9"/><ellipse cx="4.4" cy="3.7" rx="3.2" ry="3.4" fill="#b8a060" stroke="#4a3a1a" stroke-width="0.9"/><ellipse cx="4.5" cy="4.3" rx="1.7" ry="2.3" fill="#f0d4a8"/><path d="M6.4 15 C6 11 7.3 8.8 9.8 8.6 L12.2 8.6 C14.8 8.8 16 10.6 15.8 14.8 L6.8 15z" fill="#a8c8f0" stroke="#3a5888" stroke-width="0.9"/><ellipse cx="10.8" cy="5.4" rx="3.2" ry="3.7" fill="#2e2012" stroke="#201408" stroke-width="0.7"/><ellipse cx="10.2" cy="6.2" rx="1.9" ry="2.6" fill="#d09a68"/></svg><div class="t" style="left:300.60px;top:344.58px;font-size:12.2px;letter-spacing:0px;color:#2a2a2a;transform:scaleX(0.912);">Groupe de réplication d...</div>
<div class="t" style="left:439.70px;top:344.58px;font-size:12.2px;letter-spacing:0px;color:#2a2a2a;transform:scaleX(0.912);">Groupe de sécurité - Domaine ...</div>
<div class="t" style="left:613.90px;top:344.58px;font-size:12.2px;letter-spacing:0px;color:#2a2a2a;transform:scaleX(0.912);">Les mots de passe des ...</div>
<svg class="i" style="left:283px;top:362.79px" width="17" height="16" viewBox="0 0 17 16"><path d="M0.7 11.8 L0.7 8.6 C0.7 7.3 1.8 6.8 3 6.8 L6 6.8 C7.2 6.8 7.8 7.5 7.8 8.6 L7.8 11.8z" fill="#80c470" stroke="#2e6a26" stroke-width="0.9"/><ellipse cx="4.4" cy="3.7" rx="3.2" ry="3.4" fill="#b8a060" stroke="#4a3a1a" stroke-width="0.9"/><ellipse cx="4.5" cy="4.3" rx="1.7" ry="2.3" fill="#f0d4a8"/><path d="M6.4 15 C6 11 7.3 8.8 9.8 8.6 L12.2 8.6 C14.8 8.8 16 10.6 15.8 14.8 L6.8 15z" fill="#a8c8f0" stroke="#3a5888" stroke-width="0.9"/><ellipse cx="10.8" cy="5.4" rx="3.2" ry="3.7" fill="#2e2012" stroke="#201408" stroke-width="0.7"/><ellipse cx="10.2" cy="6.2" rx="1.9" ry="2.6" fill="#d09a68"/></svg><div class="t" style="left:300.60px;top:362.76px;font-size:12.2px;letter-spacing:0px;color:#2a2a2a;transform:scaleX(0.912);">Groupe de réplication d...</div>
<div class="t" style="left:439.70px;top:362.76px;font-size:12.2px;letter-spacing:0px;color:#2a2a2a;transform:scaleX(0.912);">Groupe de sécurité - Domaine ...</div>
<div class="t" style="left:613.90px;top:362.76px;font-size:12.2px;letter-spacing:0px;color:#2a2a2a;transform:scaleX(0.912);">Les mots de passe des ...</div>
<div class="b" style="left:299px;top:379.47px;width:453px;height:17.6px;background:#0078d7;"></div><svg class="i" style="left:285px;top:380.17499999999995px" width="16" height="16" viewBox="0 0 16 16"><path d="M0.8 15 C0.5 11 1.8 9.2 4.2 9 L8.5 9 C11.5 9.2 12.6 11.5 12.4 15.3 L1.2 15.3z" fill="#4a94e0" stroke="#1a5aa8" stroke-width="0.9"/><ellipse cx="4.6" cy="4.6" rx="3.4" ry="4.1" fill="#1e4a88" stroke="#123a70" stroke-width="0.7"/><ellipse cx="5.3" cy="5.4" rx="2.2" ry="3" fill="#3a84d0"/><path d="M9 10.5 L12.5 13 L10 14.5z" fill="#0a3a78"/></svg><div class="t" style="left:300.60px;top:380.95px;font-size:12.2px;letter-spacing:0px;color:#ffffff;transform:scaleX(0.912);">Invité</div>
<div class="t" style="left:439.70px;top:380.95px;font-size:12.2px;letter-spacing:0px;color:#ffffff;transform:scaleX(0.912);">Utilisateur</div>
<div class="t" style="left:613.90px;top:380.95px;font-size:12.2px;letter-spacing:0px;color:#ffffff;transform:scaleX(0.912);">Compte d’utilisateur inv...</div>
<svg class="i" style="left:283px;top:399.16px" width="17" height="16" viewBox="0 0 17 16"><path d="M0.7 11.8 L0.7 8.6 C0.7 7.3 1.8 6.8 3 6.8 L6 6.8 C7.2 6.8 7.8 7.5 7.8 8.6 L7.8 11.8z" fill="#80c470" stroke="#2e6a26" stroke-width="0.9"/><ellipse cx="4.4" cy="3.7" rx="3.2" ry="3.4" fill="#b8a060" stroke="#4a3a1a" stroke-width="0.9"/><ellipse cx="4.5" cy="4.3" rx="1.7" ry="2.3" fill="#f0d4a8"/><path d="M6.4 15 C6 11 7.3 8.8 9.8 8.6 L12.2 8.6 C14.8 8.8 16 10.6 15.8 14.8 L6.8 15z" fill="#a8c8f0" stroke="#3a5888" stroke-width="0.9"/><ellipse cx="10.8" cy="5.4" rx="3.2" ry="3.7" fill="#2e2012" stroke="#201408" stroke-width="0.7"/><ellipse cx="10.2" cy="6.2" rx="1.9" ry="2.6" fill="#d09a68"/></svg><div class="t" style="left:300.60px;top:399.13px;font-size:12.2px;letter-spacing:0px;color:#2a2a2a;transform:scaleX(0.912);">Invités du domaine</div>
<div class="t" style="left:439.70px;top:399.13px;font-size:12.2px;letter-spacing:0px;color:#2a2a2a;transform:scaleX(0.912);">Groupe de sécurité - Global</div>
<div class="t" style="left:613.90px;top:399.13px;font-size:12.2px;letter-spacing:0px;color:#2a2a2a;transform:scaleX(0.912);">Tous les invités du doma...</div>
<svg class="i" style="left:283px;top:417.34499999999997px" width="17" height="16" viewBox="0 0 17 16"><path d="M0.7 11.8 L0.7 8.6 C0.7 7.3 1.8 6.8 3 6.8 L6 6.8 C7.2 6.8 7.8 7.5 7.8 8.6 L7.8 11.8z" fill="#80c470" stroke="#2e6a26" stroke-width="0.9"/><ellipse cx="4.4" cy="3.7" rx="3.2" ry="3.4" fill="#b8a060" stroke="#4a3a1a" stroke-width="0.9"/><ellipse cx="4.5" cy="4.3" rx="1.7" ry="2.3" fill="#f0d4a8"/><path d="M6.4 15 C6 11 7.3 8.8 9.8 8.6 L12.2 8.6 C14.8 8.8 16 10.6 15.8 14.8 L6.8 15z" fill="#a8c8f0" stroke="#3a5888" stroke-width="0.9"/><ellipse cx="10.8" cy="5.4" rx="3.2" ry="3.7" fill="#2e2012" stroke="#201408" stroke-width="0.7"/><ellipse cx="10.2" cy="6.2" rx="1.9" ry="2.6" fill="#d09a68"/></svg><div class="t" style="left:300.60px;top:417.32px;font-size:12.2px;letter-spacing:0px;color:#2a2a2a;transform:scaleX(0.912);">Ordinateurs du domaine</div>
<div class="t" style="left:439.70px;top:417.32px;font-size:12.2px;letter-spacing:0px;color:#2a2a2a;transform:scaleX(0.912);">Groupe de sécurité - Global</div>
<div class="t" style="left:613.90px;top:417.32px;font-size:12.2px;letter-spacing:0px;color:#2a2a2a;transform:scaleX(0.912);">Toutes les stations de tra...</div>
<svg class="i" style="left:283px;top:435.53000000000003px" width="17" height="16" viewBox="0 0 17 16"><path d="M0.7 11.8 L0.7 8.6 C0.7 7.3 1.8 6.8 3 6.8 L6 6.8 C7.2 6.8 7.8 7.5 7.8 8.6 L7.8 11.8z" fill="#80c470" stroke="#2e6a26" stroke-width="0.9"/><ellipse cx="4.4" cy="3.7" rx="3.2" ry="3.4" fill="#b8a060" stroke="#4a3a1a" stroke-width="0.9"/><ellipse cx="4.5" cy="4.3" rx="1.7" ry="2.3" fill="#f0d4a8"/><path d="M6.4 15 C6 11 7.3 8.8 9.8 8.6 L12.2 8.6 C14.8 8.8 16 10.6 15.8 14.8 L6.8 15z" fill="#a8c8f0" stroke="#3a5888" stroke-width="0.9"/><ellipse cx="10.8" cy="5.4" rx="3.2" ry="3.7" fill="#2e2012" stroke="#201408" stroke-width="0.7"/><ellipse cx="10.2" cy="6.2" rx="1.9" ry="2.6" fill="#d09a68"/></svg><div class="t" style="left:300.60px;top:435.50px;font-size:12.2px;letter-spacing:0px;color:#2a2a2a;transform:scaleX(0.912);">Propriétaires créateurs d...</div>
<div class="t" style="left:439.70px;top:435.50px;font-size:12.2px;letter-spacing:0px;color:#2a2a2a;transform:scaleX(0.912);">Groupe de sécurité - Global</div>
<div class="t" style="left:613.90px;top:435.50px;font-size:12.2px;letter-spacing:0px;color:#2a2a2a;transform:scaleX(0.912);">Les membres de ce grou...</div>
<svg class="i" style="left:283px;top:453.715px" width="17" height="16" viewBox="0 0 17 16"><path d="M0.7 11.8 L0.7 8.6 C0.7 7.3 1.8 6.8 3 6.8 L6 6.8 C7.2 6.8 7.8 7.5 7.8 8.6 L7.8 11.8z" fill="#80c470" stroke="#2e6a26" stroke-width="0.9"/><ellipse cx="4.4" cy="3.7" rx="3.2" ry="3.4" fill="#b8a060" stroke="#4a3a1a" stroke-width="0.9"/><ellipse cx="4.5" cy="4.3" rx="1.7" ry="2.3" fill="#f0d4a8"/><path d="M6.4 15 C6 11 7.3 8.8 9.8 8.6 L12.2 8.6 C14.8 8.8 16 10.6 15.8 14.8 L6.8 15z" fill="#a8c8f0" stroke="#3a5888" stroke-width="0.9"/><ellipse cx="10.8" cy="5.4" rx="3.2" ry="3.7" fill="#2e2012" stroke="#201408" stroke-width="0.7"/><ellipse cx="10.2" cy="6.2" rx="1.9" ry="2.6" fill="#d09a68"/></svg><div class="t" style="left:300.60px;top:453.69px;font-size:12.2px;letter-spacing:0px;color:#2a2a2a;transform:scaleX(0.912);">Protected Users</div>
<div class="t" style="left:439.70px;top:453.69px;font-size:12.2px;letter-spacing:0px;color:#2a2a2a;transform:scaleX(0.912);">Groupe de sécurité - Global</div>
<div class="t" style="left:613.90px;top:453.69px;font-size:12.2px;letter-spacing:0px;color:#2a2a2a;transform:scaleX(0.912);">Les membres de ce grou...</div>
<svg class="i" style="left:283px;top:471.90000000000003px" width="17" height="16" viewBox="0 0 17 16"><path d="M0.7 11.8 L0.7 8.6 C0.7 7.3 1.8 6.8 3 6.8 L6 6.8 C7.2 6.8 7.8 7.5 7.8 8.6 L7.8 11.8z" fill="#80c470" stroke="#2e6a26" stroke-width="0.9"/><ellipse cx="4.4" cy="3.7" rx="3.2" ry="3.4" fill="#b8a060" stroke="#4a3a1a" stroke-width="0.9"/><ellipse cx="4.5" cy="4.3" rx="1.7" ry="2.3" fill="#f0d4a8"/><path d="M6.4 15 C6 11 7.3 8.8 9.8 8.6 L12.2 8.6 C14.8 8.8 16 10.6 15.8 14.8 L6.8 15z" fill="#a8c8f0" stroke="#3a5888" stroke-width="0.9"/><ellipse cx="10.8" cy="5.4" rx="3.2" ry="3.7" fill="#2e2012" stroke="#201408" stroke-width="0.7"/><ellipse cx="10.2" cy="6.2" rx="1.9" ry="2.6" fill="#d09a68"/></svg><div class="t" style="left:300.60px;top:471.87px;font-size:12.2px;letter-spacing:0px;color:#2a2a2a;transform:scaleX(0.912);">Serveurs RAS et IAS</div>
<div class="t" style="left:439.70px;top:471.87px;font-size:12.2px;letter-spacing:0px;color:#2a2a2a;transform:scaleX(0.912);">Groupe de sécurité - Domaine ...</div>
<div class="t" style="left:613.90px;top:471.87px;font-size:12.2px;letter-spacing:0px;color:#2a2a2a;transform:scaleX(0.912);">Les serveurs de ce group...</div>
<svg class="i" style="left:283px;top:490.085px" width="17" height="16" viewBox="0 0 17 16"><path d="M0.7 11.8 L0.7 8.6 C0.7 7.3 1.8 6.8 3 6.8 L6 6.8 C7.2 6.8 7.8 7.5 7.8 8.6 L7.8 11.8z" fill="#80c470" stroke="#2e6a26" stroke-width="0.9"/><ellipse cx="4.4" cy="3.7" rx="3.2" ry="3.4" fill="#b8a060" stroke="#4a3a1a" stroke-width="0.9"/><ellipse cx="4.5" cy="4.3" rx="1.7" ry="2.3" fill="#f0d4a8"/><path d="M6.4 15 C6 11 7.3 8.8 9.8 8.6 L12.2 8.6 C14.8 8.8 16 10.6 15.8 14.8 L6.8 15z" fill="#a8c8f0" stroke="#3a5888" stroke-width="0.9"/><ellipse cx="10.8" cy="5.4" rx="3.2" ry="3.7" fill="#2e2012" stroke="#201408" stroke-width="0.7"/><ellipse cx="10.2" cy="6.2" rx="1.9" ry="2.6" fill="#d09a68"/></svg><div class="t" style="left:300.60px;top:490.06px;font-size:12.2px;letter-spacing:0px;color:#2a2a2a;transform:scaleX(0.912);">Utilisateurs du domaine</div>
<div class="t" style="left:439.70px;top:490.06px;font-size:12.2px;letter-spacing:0px;color:#2a2a2a;transform:scaleX(0.912);">Groupe de sécurité - Global</div>
<div class="t" style="left:613.90px;top:490.06px;font-size:12.2px;letter-spacing:0px;color:#2a2a2a;transform:scaleX(0.912);">Tous les utilisateurs du d...</div>
<svg class="i" style="left:482px;top:141px" width="14" height="19" viewBox="0 0 14 19"><path d="M0.5 0.5 L0.5 15.5 L4.2 11.8 L7.4 17.9 L9.8 16.9 L7 11.3 L12.2 11.3 Z" fill="#fff" stroke="#111" stroke-width="1" stroke-linejoin="miter"/></svg></body></html>
